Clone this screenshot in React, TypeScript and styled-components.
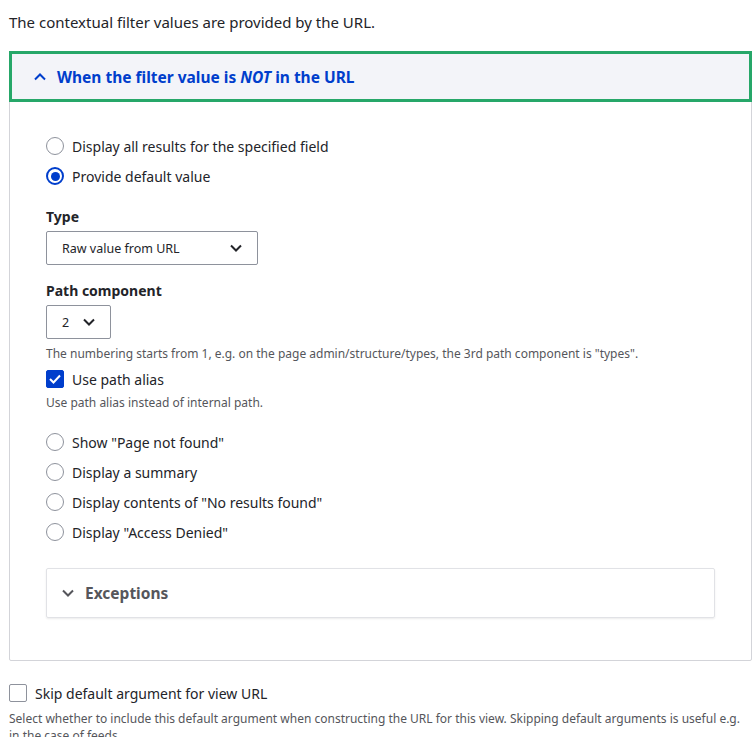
import React from 'react';
import styled, { createGlobalStyle } from 'styled-components';

const Global = createGlobalStyle`
  body { margin: 0; font-family: "Noto Sans", "Open Sans", sans-serif; color: #232429; background: #fff; }
`;

const Page = styled.div`
  padding: 9px 2px 0 9px;
`;

const Intro = styled.p`
  margin: 0 0 16px;
  font-size: 15px;
  line-height: 26px;
`;

const Details = styled.div`
  border: 1px solid #d3d4d9;
  border-radius: 2px;
`;

const Summary = styled.div`
  display: flex;
  align-items: center;
  gap: 10px;
  height: 51px;
  box-sizing: border-box;
  padding-left: 21px;
  margin: -1px;
  border: 3px solid #26a769;
  background: #f3f4f9;
  color: #003ecc;
  font-weight: 700;
  font-size: 15.5px;
`;

const Body = styled.div`
  padding: 30px 36px 42px 36px;
  display: flex;
  flex-direction: column;
`;

const Option = styled.label`
  display: flex;
  align-items: center;
  gap: 8px;
  font-size: 14px;
  height: 30px;
`;

const Radio = styled.span<{ checked?: boolean }>`
  width: 18px;
  height: 18px;
  box-sizing: border-box;
  border-radius: 50%;
  border: ${({ checked }) => (checked ? '2px solid #003ecc' : '1px solid #8e929c')};
  display: flex;
  align-items: center;
  justify-content: center;
  &::after {
    content: '';
    display: ${({ checked }) => (checked ? 'block' : 'none')};
    width: 9px;
    height: 9px;
    border-radius: 50%;
    background: #003ecc;
  }
`;

const Check = styled.span<{ checked?: boolean }>`
  width: 18px;
  height: 18px;
  box-sizing: border-box;
  border-radius: 2px;
  border: 1px solid ${({ checked }) => (checked ? '#003ecc' : '#8e929c')};
  background: ${({ checked }) => (checked ? '#003ecc' : '#fff')};
  display: flex;
  align-items: center;
  justify-content: center;
`;

const FieldLabel = styled.div<{ top: number }>`
  font-weight: 700;
  font-size: 14px;
  margin-top: ${({ top }) => top}px;
  margin-bottom: 5px;
`;

const Select = styled.div<{ w: number }>`
  width: ${({ w }) => w}px;
  height: 34px;
  box-sizing: border-box;
  border: 1px solid #8e929c;
  border-radius: 2px;
  display: flex;
  align-items: center;
  justify-content: space-between;
  padding: 0 14px 0 15px;
  font-size: 12.5px;
`;

const Description = styled.div<{ top?: number }>`
  font-size: 12px;
  color: #55565b;
  margin-top: ${({ top }) => top ?? 0}px;
  line-height: 17px;
`;

const Spacer = styled.div<{ h: number }>`
  height: ${({ h }) => h}px;
`;

const Exceptions = styled.div`
  margin-top: 21px;
  border: 1px solid #e1e2e6;
  border-radius: 2px;
  box-shadow: 0 1px 2px rgba(0, 0, 0, 0.08);
  height: 48px;
  display: flex;
  align-items: center;
  gap: 10px;
  padding-left: 14px;
  font-weight: 700;
  font-size: 15.5px;
  color: #55565b;
`;

const Bottom = styled.div`
  margin-top: 17px;
`;

const Chevron = ({ up, color, size = 14 }: { up?: boolean; color: string; size?: number }) => (
  <svg width={size} height={size} viewBox="0 0 14 14" fill="none">
    <path d={up ? 'M2 9.5 7 4.5l5 5' : 'M2 4.5l5 5 5-5'} stroke={color} strokeWidth="2" />
  </svg>
);

export default function App() {
  return (
    <Page>
      <Global />
      <Intro>The contextual filter values are provided by the URL.</Intro>
      <Details>
        <Summary>
          <Chevron up color="#003ecc" size={14} />
          <span>When the filter value is <i>NOT</i> in the URL</span>
        </Summary>
        <Body>
          <Option><Radio />Display all results for the specified field</Option>
          <Option><Radio checked />Provide default value</Option>
          <FieldLabel top={16}>Type</FieldLabel>
          <Select w={212}>Raw value from URL<Chevron color="#232429" /></Select>
          <FieldLabel top={16}>Path component</FieldLabel>
          <Select w={65}>2<Chevron color="#232429" /></Select>
          <Description top={6}>
            The numbering starts from 1, e.g. on the page admin/structure/types, the 3rd path component is "types".
          </Description>
          <Spacer h={2} />
          <Option>
            <Check checked>
              <svg width="12" height="10" viewBox="0 0 12 10"><path d="M1 5l3.5 3.5L11 1.5" stroke="#fff" strokeWidth="2" fill="none" /></svg>
            </Check>
            Use path alias
          </Option>
          <Description>Use path alias instead of internal path.</Description>
          <Spacer h={16} />
          <Option><Radio />Show "Page not found"</Option>
          <Option><Radio />Display a summary</Option>
          <Option><Radio />Display contents of "No results found"</Option>
          <Option><Radio />Display "Access Denied"</Option>
          <Exceptions>
            <Chevron color="#55565b" size={14} />
            Exceptions
          </Exceptions>
        </Body>
      </Details>
      <Bottom>
        <Option><Check />Skip default argument for view URL</Option>
        <Description top={2}>
          Select whether to include this default argument when constructing the URL for this view. Skipping default arguments is useful e.g. in the case of feeds.
        </Description>
      </Bottom>
    </Page>
  );
}
